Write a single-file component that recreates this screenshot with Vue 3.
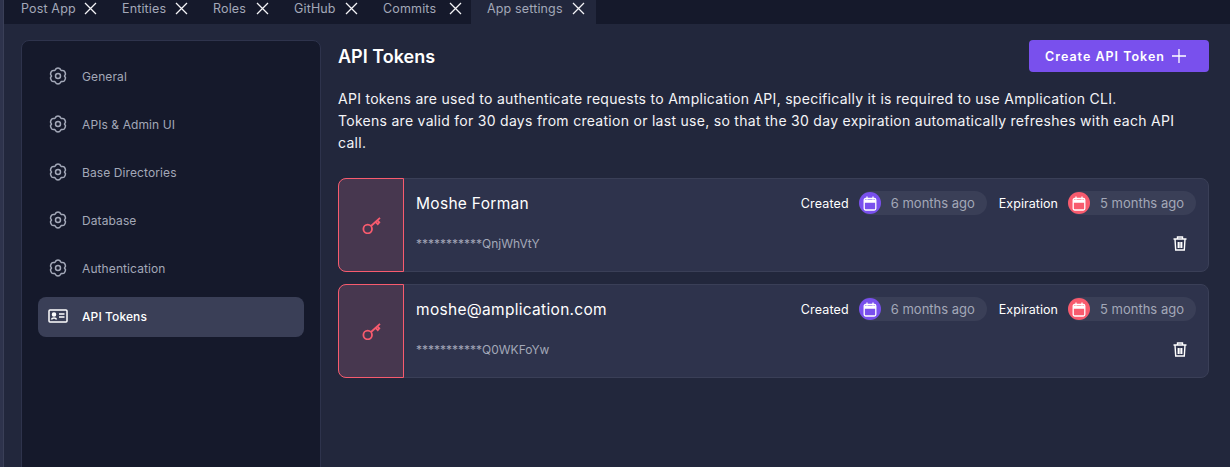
<script setup>
const tabs = [
  { name: 'Post App', w: 101 },
  { name: 'Entities', w: 91 },
  { name: 'Roles', w: 81 },
  { name: 'GitHub', w: 89 },
  { name: 'Commits', w: 104 },
  { name: 'App settings', w: 125, active: true }
]
const nav = ['General', 'APIs & Admin UI', 'Base Directories', 'Database', 'Authentication']
const tokens = [
  { name: 'Moshe Forman', code: '***********QnjWhVtY' },
  { name: 'moshe@amplication.com', code: '***********Q0WKFoYw' }
]
</script>

<template>
  <div class="app">
    <div class="strip"></div>
    <div class="body">
      <div class="tabs">
        <div v-for="t in tabs" :key="t.name" class="tab" :class="{ active: t.active }" :style="{ width: t.w + 'px' }">
          <span>{{ t.name }}</span>
          <svg width="13" height="13" viewBox="0 0 13 13" fill="none" stroke="#f4f4f7" stroke-width="1.3"><path d="M1 1l11 11M12 1L1 12" /></svg>
        </div>
      </div>
      <div class="content">
        <aside class="side">
          <div v-for="n in nav" :key="n" class="nav">
            <svg width="18" height="18" viewBox="0 0 18 18" fill="none" stroke="#a3a8b8" stroke-width="1.500" stroke-linejoin="round">
              <path d="M7.400 1.500c1-.5 2.200-.5 3.200 0 .9.500 1 1.700 1.800 2 .9.300 2-.2 2.800.5.700.8 1.200 1.900 1.300 3 0 1-1 1.300-1 2s1 1 1 2c-.1 1.100-.6 2.200-1.300 3-.8.700-1.900.2-2.800.5-.8.300-.9 1.500-1.800 2-1 .5-2.200.5-3.200 0-.9-.5-1-1.700-1.800-2-.9-.3-2 .2-2.800-.5-.7-.8-1.200-1.900-1.300-3 0-1 1-1.300 1-2s-1-1-1-2c.1-1.100.6-2.200 1.300-3 .8-.7 1.900-.2 2.800-.5.800-.3.900-1.500 1.800-2z" />
              <circle cx="9" cy="9" r="2.500" />
            </svg>
            <span>{{ n }}</span>
          </div>
          <div class="nav on">
            <svg width="20" height="14" viewBox="0 0 20 14" fill="none" stroke="#fff" stroke-width="1.500">
              <rect x="1" y="1" width="18" height="12" rx="1" />
              <circle cx="6" cy="5.500" r="1.500" fill="#fff" />
              <path d="M3.500 10.500c.5-2 4.500-2 5 0M11 5h5.500M11 8h5.500" />
            </svg>
            <span>API Tokens</span>
          </div>
        </aside>
        <main class="main">
          <div class="head">
            <h1>API Tokens</h1>
            <button class="create">
              Create API Token
              <svg width="14" height="14" viewBox="0 0 14 14" stroke="#fff" stroke-width="1.300"><path d="M7 0v14M0 7h14" /></svg>
            </button>
          </div>
          <p class="desc">
            API tokens are used to authenticate requests to Amplication API, specifically it is required to use Amplication CLI.<br />
            Tokens are valid for 30 days from creation or last use, so that the 30 day expiration automatically refreshes with each API call.
          </p>
          <div class="cards">
            <div v-for="t in tokens" :key="t.name" class="card">
              <div class="keybox">
                <svg width="20" height="18" viewBox="0 0 20 18" fill="none" stroke="#f85b6e" stroke-width="1.800">
                  <circle cx="6.700" cy="13" r="4.300" />
                  <path d="M10 10l9-8.200M14.500 5.800l2.300 2.400 1.500-1.800-2-2" />
                </svg>
              </div>
              <div class="info">
                <div class="row">
                  <span class="name">{{ t.name }}</span>
                  <span class="lbl">Created</span>
                  <span class="pill">
                    <span class="dot purple"><svg width="14" height="15" viewBox="0 0 14 15" fill="none" stroke="#fff" stroke-width="1.300"><rect x="1.200" y="2.500" width="11.600" height="11.500" rx="1.500" /><path d="M1.200 4.500h11.600M1.200 6h11.600M4 0.500v3M10 0.500v3" /></svg></span>
                    6 months ago
                  </span>
                  <span class="lbl second">Expiration</span>
                  <span class="pill">
                    <span class="dot red"><svg width="14" height="15" viewBox="0 0 14 15" fill="none" stroke="#fff" stroke-width="1.300"><rect x="1.200" y="2.500" width="11.600" height="11.500" rx="1.500" /><path d="M1.200 4.500h11.600M1.200 6h11.600M4 0.500v3M10 0.500v3" /></svg></span>
                    5 months ago
                  </span>
                </div>
                <div class="row lower">
                  <span class="code">{{ t.code }}</span>
                  <svg class="trash" width="14" height="15" viewBox="0 0 14 15" fill="none" stroke="#fff" stroke-width="1.400"><path d="M0.500 3h13M4.500 3V1h5v2M2 3l.7 11h8.600L12 3M5.300 6v6M7 6v6M8.700 6v6" /></svg>
                </div>
              </div>
            </div>
          </div>
        </main>
      </div>
    </div>
  </div>
</template>

<style>
html, body { margin: 0; background: #22273c; overflow: hidden; }
</style>

<style scoped>
.app { display: flex; height: 467px; width: 1230px; overflow: hidden; font-family: Inter, "Open Sans", sans-serif; color: #f4f4f7; background: #22273c; }
.strip { width: 3px; flex: none; background: #2e334c; border-right: 1px solid #3a3f57; }
.body { flex: 1; min-width: 0; display: flex; flex-direction: column; }
.tabs { height: 24px; display: flex; flex: none; padding-left: 1px; background: #15192b; }
.tab { display: flex; align-items: center; justify-content: space-between; box-sizing: border-box; font-size: 12.500px; letter-spacing: .15px; color: #a3a8b8; padding: 0 9px 8px 16px; height: 24px; }
.tab.active { background: #22273c; padding-right: 11px; }
.content { flex: 1; display: flex; padding: 16px 21px 0 17px; gap: 17px; min-height: 0; }
.side { width: 300px; flex: none; box-sizing: border-box; height: 440px; background: #15192b; border: 1px solid #2e334c; border-radius: 8px; padding: 16px; display: flex; flex-direction: column; gap: 8px; }
.nav { height: 40px; display: flex; align-items: center; gap: 15px; padding: 0 0 2px 11px; font-size: 12px; letter-spacing: .1px; color: #a3a8b8; border-radius: 8px; width: 266px; box-sizing: border-box; }
.nav.on { background: #3a3f57; color: #fff; font-weight: 500; padding-left: 10px; gap: 14px; }
.main { flex: 1; min-width: 0; }
.head { display: flex; justify-content: space-between; align-items: center; height: 32px; }
h1 { margin: 0; font-size: 18px; font-weight: 600; color: #fff; }
.create { width: 180px; height: 32px; border: 0; border-radius: 4px; padding: 0 7px 0 0; background: #7950ed; color: #fff; font: 600 12.500px Inter, sans-serif; letter-spacing: 1px; display: flex; align-items: center; justify-content: center; gap: 7px; }
.desc { margin: 16px 0 0; max-width: 860px; font-size: 14px; letter-spacing: .285px; line-height: 22px; color: #f4f4f7; }
.cards { display: flex; flex-direction: column; gap: 12px; margin-top: 24px; }
.card { height: 94px; box-sizing: border-box; display: flex; background: #2e334c; border: 1px solid #3a3f57; border-radius: 8px; }
.keybox { width: 66px; flex: none; margin: -1px 0 -1px -1px; box-sizing: border-box; background: #47374f; border: 1px solid #f85b6e; border-radius: 8px 0 0 8px; display: flex; align-items: center; justify-content: center; }
.info { flex: 1; min-width: 0; padding: 0 12px; display: flex; flex-direction: column; }
.row { display: flex; align-items: center; height: 24px; margin-top: 12px; }
.name { flex: 1; font-size: 15.500px; letter-spacing: .3px; color: #fff; font-weight: 400; }
.lbl { font-size: 12.500px; letter-spacing: .15px; color: #fff; font-weight: 400; margin-right: 10px; }
.lbl.second { margin-left: 12px; letter-spacing: .05px; }
.pill { display: flex; align-items: center; height: 24px; border-radius: 12px; background: #3a3f57; color: #a3a8b8; font-size: 13px; width: 128px; box-sizing: border-box; gap: 10px; }
.dot { width: 22px; height: 22px; border-radius: 50%; display: flex; align-items: center; justify-content: center; flex: none; }
.purple { background: #7950ed; }
.red { background: #f85b6e; }
.lower { justify-content: space-between; margin-top: 16px; }
.code { font-size: 12px; color: #a3a8b8; }
.trash { margin-right: 9px; }
</style>
